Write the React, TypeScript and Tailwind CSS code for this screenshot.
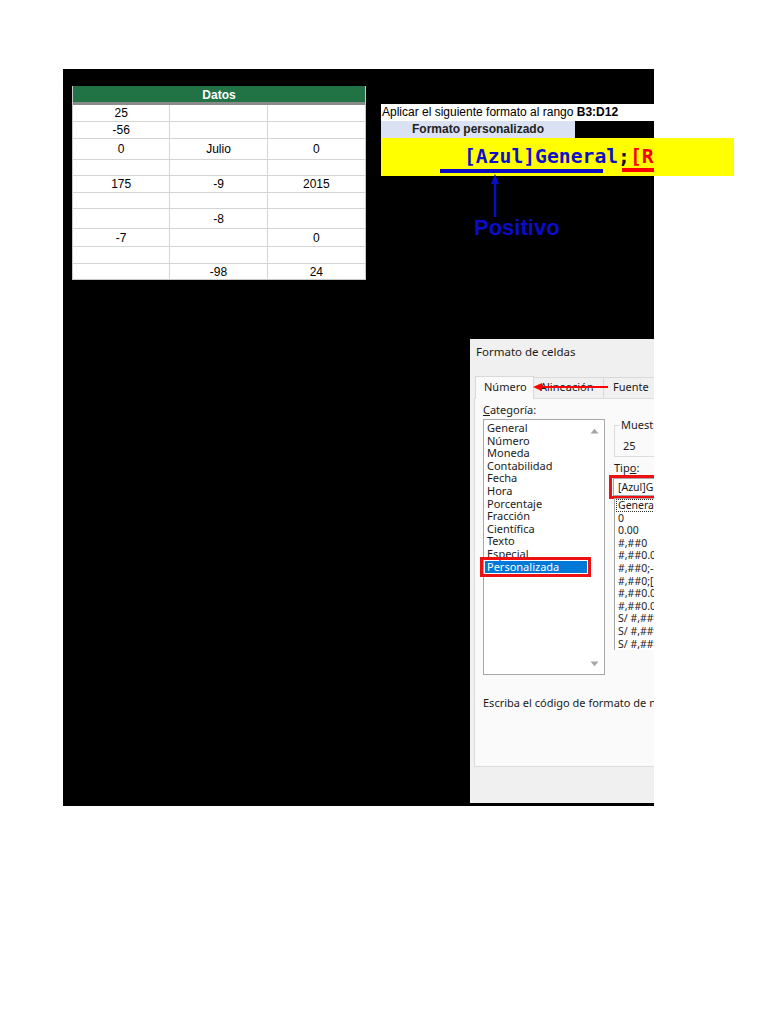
import React from "react";

const rows: { h: number; c: string[] }[] = [
  { h: 17, c: ["25", "", ""] },
  { h: 17, c: ["-56", "", ""] },
  { h: 21, c: ["0", "Julio", "0"] },
  { h: 16, c: ["", "", ""] },
  { h: 17, c: ["175", "-9", "2015"] },
  { h: 16, c: ["", "", ""] },
  { h: 20, c: ["", "-8", ""] },
  { h: 18, c: ["-7", "", "0"] },
  { h: 17, c: ["", "", ""] },
  { h: 15, c: ["", "-98", "24"] },
];

const categories = [
  "General",
  "Número",
  "Moneda",
  "Contabilidad",
  "Fecha",
  "Hora",
  "Porcentaje",
  "Fracción",
  "Científica",
  "Texto",
  "Especial",
];

const tipos = [
  "0",
  "0.00",
  "#,##0",
  "#,##0.00",
  "#,##0;-#,##0",
  "#,##0;[Rojo]-#,##0",
  "#,##0.00;-#,##0.00",
  "#,##0.00;[Rojo]-#,##0.00",
  "S/ #,##0;S/ -#,##0",
  "S/ #,##0;[Rojo]S/ -#,##0",
  "S/ #,##0.00;S/ -#,##0.00",
];

function DataTable() {
  return (
    <div className="ml-[9px] mt-[17px] w-[294px] shrink-0 self-start bg-white border-l border-r border-b border-[#c8c8c8] font-['Liberation_Sans',Arial,sans-serif] text-[12px] text-black">
      <div className="h-[19px] bg-[#217346] border-b-[3px] border-[#8a8a8a] flex items-center justify-center text-white font-bold leading-none pt-[1px]">
        Datos
      </div>
      {rows.map((r, i) => (
        <div
          key={i}
          className="grid grid-cols-3 border-b border-[#d4d4d4] last:border-b-0"
          style={{ height: r.h }}
        >
          {r.c.map((v, j) => (
            <div
              key={j}
              className={
                "flex items-center justify-center leading-none " +
                (j < 2 ? "border-r border-[#d4d4d4]" : "")
              }
            >
              {v}
            </div>
          ))}
        </div>
      ))}
    </div>
  );
}

function UpArrow() {
  return (
    <svg width="9" height="6" viewBox="0 0 9 6">
      <path d="M0.5 5.5 L4.5 0.8 L8.5 5.5 Z" fill="#a6a6a6" />
    </svg>
  );
}
function DownArrow() {
  return (
    <svg width="9" height="6" viewBox="0 0 9 6">
      <path d="M0.5 0.5 L4.5 5.2 L8.5 0.5 Z" fill="#a6a6a6" />
    </svg>
  );
}

function Dialog() {
  return (
    <div className="ml-[89px] mt-[100px] w-[184px] h-[464px] shrink-0 bg-[#f0f0f0] overflow-hidden flex flex-col font-['Noto_Sans',sans-serif] text-[11px] text-[#1b1b1b]">
      <div className="h-[36px] shrink-0 pl-[6px] pt-[5px] text-[11.5px] leading-[16px] whitespace-nowrap">
        Formato de celdas
      </div>
      {/* Tabs */}
      <div className="relative h-[23px] shrink-0 pl-[5px] flex items-end whitespace-nowrap">
        <div className="w-[59px] shrink-0 h-[23px] bg-[#fafafa] border-t border-l border-r border-[#d9d9d9] pl-[8px] pt-[3px] leading-[14px] relative z-10 -mb-px">
          Número
        </div>
        <div className="w-[70px] shrink-0 h-[21px] border-t border-r border-[#d9d9d9] pl-[6px] pt-[2px] leading-[14px]">
          Alineación
        </div>
        <div className="w-[80px] shrink-0 h-[21px] border-t border-[#d9d9d9] pl-[9px] pt-[2px] leading-[14px]">
          Fuente
        </div>
        <svg
          className="absolute left-[63px] top-[7px] z-20"
          width="76"
          height="10"
          viewBox="0 0 76 10"
        >
          <line x1="7" y1="5" x2="75" y2="5" stroke="#ff0000" strokeWidth="2" />
          <path d="M0 5 L9 1 L9 9 Z" fill="#ff0000" />
        </svg>
      </div>
      {/* Panel */}
      <div className="ml-[4px] h-[369px] shrink-0 bg-[#fafafa] border-l border-t border-b border-[#dcdcdc] flex flex-col">
        <div className="pl-[8px] pt-[4px] h-[20px] leading-[14px] whitespace-nowrap">
          <span className="underline">C</span>ategoría:
        </div>
        <div className="flex pl-[8px] gap-[8px] h-[256px]">
          {/* category listbox */}
          <div className="relative w-[122px] h-[256px] shrink-0 bg-white border border-[#a8a8a8] flex">
            <div className="flex-1 pt-[2px] leading-[12.6px] whitespace-nowrap">
              {categories.map((c) => (
                <div key={c} className="h-[12.6px] pl-[3px]">
                  {c}
                </div>
              ))}
              <div className="h-[12.6px] pl-[2px] ml-[1px] bg-[#0078d7] text-white w-[102px]">
                Personalizada
              </div>
            </div>
            <div className="w-[17px] flex flex-col items-center justify-between pt-[8px] pb-[7px] pr-[2px]">
              <UpArrow />
              <DownArrow />
            </div>
            <div className="absolute left-[-4px] top-[137px] w-[111px] h-[20px] border-[3px] border-[#ee1111] pointer-events-none" />
          </div>
          {/* right column */}
          <div className="w-[220px] shrink-0 flex flex-col whitespace-nowrap">
            <div className="relative mt-[6px] ml-[1px] h-[32px] shrink-0 border border-[#dcdcdc]">
              <div className="absolute left-[5px] -top-[7px] bg-[#fafafa] px-[1px] leading-[12px]">
                Muestra
              </div>
              <div className="pl-[8px] pt-[14px] leading-[12px]">25</div>
            </div>
            <div className="ml-[1px] mt-[4px] h-[14px] shrink-0 leading-[14px]">
              Tip<span className="underline">o</span>:
            </div>
            <div className="-ml-[4px] h-[24px] shrink-0 border-[3px] border-[#ee1111] flex">
              <div className="ml-[1px] flex-1 bg-white border border-[#a8a8a8] pl-[4px] leading-[16px] text-[10.5px]">
                [Azul]General;[Rojo]-General;General
              </div>
            </div>
            <div className="ml-[1px] -mt-[1px] h-[152px] shrink-0 bg-white border-l border-t border-[#a8a8a8] pl-[1px] leading-[12.6px] text-[10.5px]">
              <div className="h-[12.6px] pl-[1px] border border-dotted border-[#333] leading-[10.6px]">
                General
              </div>
              {tipos.map((t, i) => (
                <div key={i} className="h-[12.6px] pl-[2px]">
                  {t}
                </div>
              ))}
            </div>
          </div>
        </div>
        <div className="pl-[8px] mt-[21px] leading-[14px] whitespace-nowrap">
          Escriba el código de formato de número, usando como base uno de los códigos existentes.
        </div>
      </div>
    </div>
  );
}

export default function App() {
  return (
    <div className="w-[768px] h-[1024px] bg-white pt-[69px] pl-[63px]">
      <div className="w-[591px] h-[737px] bg-black flex">
        <DataTable />
        <div className="ml-[15px] mt-[35px] w-[273px] shrink-0 flex flex-col font-['Liberation_Sans',Arial,sans-serif]">
          <div className="h-[17px] bg-white text-[12px] leading-[17px] text-black pl-[1px] whitespace-nowrap">
            Aplicar el siguiente formato al rango <b>B3:D12</b>
          </div>
          <div className="w-[194px] h-[17px] bg-[#d9e1f2] text-[12px] leading-[17px] font-bold text-[#222] text-center">
            Formato personalizado
          </div>
          <div className="w-[353px] h-[38px] shrink-0 bg-[#ffff00]">
            <div className="relative w-[273px] h-[38px] overflow-hidden flex items-center">
              <div className="pl-[83px] whitespace-nowrap font-['DejaVu_Sans_Mono',monospace] font-bold text-[19.7px] leading-none">
                <span className="text-[#1010cc]">[Azul]General</span>
                <span className="text-[#111]">;</span>
                <span className="text-[#ff0000]">[Rojo]</span>
              </div>
              <div className="absolute left-[59px] top-[31px] w-[163px] h-[4px] bg-[#0c0cc4]" />
              <div className="absolute left-[241px] top-[30px] w-[60px] h-[4px] bg-[#ff0000]" />
            </div>
          </div>
          <svg
            className="ml-[109px] -mt-[2px]"
            width="10"
            height="43"
            viewBox="0 0 10 43"
          >
            <path d="M5 0 L9 10 L1 10 Z" fill="#0c0cc4" />
            <line x1="5" y1="8" x2="5" y2="43" stroke="#0c0cc4" strokeWidth="2.5" />
          </svg>
          <div className="ml-[93px] text-[22px] leading-[22px] font-bold text-[#0c0cc8]">
            Positivo
          </div>
          <Dialog />
        </div>
      </div>
    </div>
  );
}
